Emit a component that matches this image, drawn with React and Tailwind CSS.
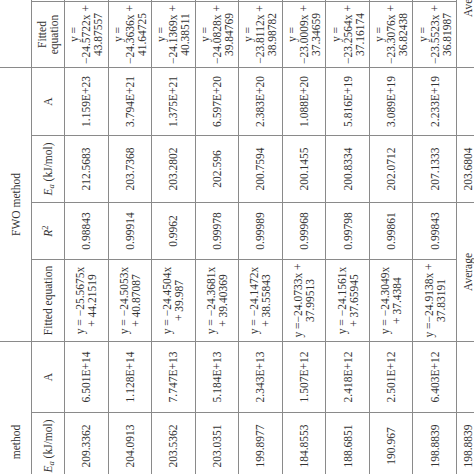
const methodOne = [
  { ea: "209.3362", a: "6.501E+14" },
  { ea: "204.0913", a: "1.128E+14" },
  { ea: "203.5362", a: "7.747E+13" },
  { ea: "203.0351", a: "5.184E+13" },
  { ea: "199.8977", a: "2.343E+13" },
  { ea: "184.8553", a: "1.507E+12" },
  { ea: "188.6851", a: "2.418E+12" },
  { ea: "190.967", a: "2.501E+12" },
  { ea: "198.8839", a: "6.403E+12" },
];

const fwo = [
  { eq: ["y = −25.5675x", "+ 44.21519"], r2: "0.98843", ea: "212.5683", a: "1.159E+23" },
  { eq: ["y = −24.5053x", "+ 40.87087"], r2: "0.99914", ea: "203.7368", a: "3.794E+21" },
  { eq: ["y = −24.4504x", "+ 39.987"], r2: "0.9962", ea: "203.2802", a: "1.375E+21" },
  { eq: ["y = −24.3681x", "+ 39.40369"], r2: "0.99978", ea: "202.596", a: "6.597E+20" },
  { eq: ["y = −24.1472x", "+ 38.55843"], r2: "0.99989", ea: "200.7594", a: "2.383E+20" },
  { eq: ["y =−24.0733x +", "37.99513"], r2: "0.99968", ea: "200.1455", a: "1.088E+20" },
  { eq: ["y = −24.1561x", "+ 37.65945"], r2: "0.99798", ea: "200.8334", a: "5.816E+19" },
  { eq: ["y = −24.3049x", "+ 37.4384"], r2: "0.99861", ea: "202.0712", a: "3.089E+19" },
  { eq: ["y =−24.9138x +", "37.83191"], r2: "0.99843", ea: "207.1333", a: "2.233E+19" },
];

const thirdEq = [
  ["−24.5722x +", "43.87557"],
  ["−24.3636x +", "41.64725"],
  ["−24.1369x +", "40.38511"],
  ["−24.0828x +", "39.84769"],
  ["−23.8112x +", "38.98782"],
  ["−23.0009x +", "37.34659"],
  ["−23.2564x +", "37.16174"],
  ["−23.3076x +", "36.82438"],
  ["−23.5523x +", "36.81987"],
];

function Cell({ children, className = "" }) {
  return (
    <div
      className={
        "flex flex-col items-center justify-center border-r border-b border-[#8a8a8a] text-center " +
        className
      }
    >
      {children}
    </div>
  );
}

function Ea() {
  return (
    <span>
      <i>E</i>
      <sub className="italic">a</sub> (kJ/mol)
    </span>
  );
}

function R2() {
  return (
    <span>
      <i>R</i>
      <sup>2</sup>
    </span>
  );
}

export default function App() {
  return (
    <div className="w-[474px] h-[474px] overflow-hidden bg-white">
      {/* the table is printed sideways, so the whole sheet is turned */}
      <div className="w-[474px] h-[474px] -rotate-90">
        <div className="ml-[-105px] grid w-max grid-cols-[50px_50px_67px_71px_82px_57px_67px_68px_66px_73px] grid-rows-[32px_33px_repeat(9,43.55px)_24px] font-['Liberation_Serif',serif] text-[11.5px] leading-[12px] text-[#333]">
          {/* method headers */}
          <Cell className="col-span-4">
            <div className="flex gap-[14px]">
              <span>KAS</span>
              <span>method</span>
            </div>
          </Cell>
          <Cell className="col-span-4">FWO method</Cell>
          <Cell className="col-span-2" />

          {/* column headers */}
          <Cell>Fitted equation</Cell>
          <Cell>
            <R2 />
          </Cell>
          <Cell>
            <Ea />
          </Cell>
          <Cell>A</Cell>
          <Cell>Fitted equation</Cell>
          <Cell>
            <R2 />
          </Cell>
          <Cell>
            <Ea />
          </Cell>
          <Cell>A</Cell>
          <Cell>
            <span>Fitted</span>
            <span>equation</span>
          </Cell>
          <Cell>
            <R2 />
          </Cell>

          {/* data rows */}
          {fwo.map((row, i) => (
            <div key={i} className="contents">
              <Cell />
              <Cell />
              <Cell>{methodOne[i].ea}</Cell>
              <Cell>{methodOne[i].a}</Cell>
              <Cell>
                <span>{row.eq[0]}</span>
                <span>{row.eq[1]}</span>
              </Cell>
              <Cell>{row.r2}</Cell>
              <Cell>{row.ea}</Cell>
              <Cell>{row.a}</Cell>
              <Cell>
                <span>y =</span>
                <span>{thirdEq[i][0]}</span>
                <span>{thirdEq[i][1]}</span>
              </Cell>
              <Cell />
            </div>
          ))}

          {/* averages */}
          <Cell className="col-span-2">Average</Cell>
          <Cell>198.8839</Cell>
          <Cell />
          <Cell className="col-span-2">Average</Cell>
          <Cell>203.6804</Cell>
          <Cell />
          <Cell className="col-span-2">Average</Cell>
        </div>
      </div>
    </div>
  );
}
